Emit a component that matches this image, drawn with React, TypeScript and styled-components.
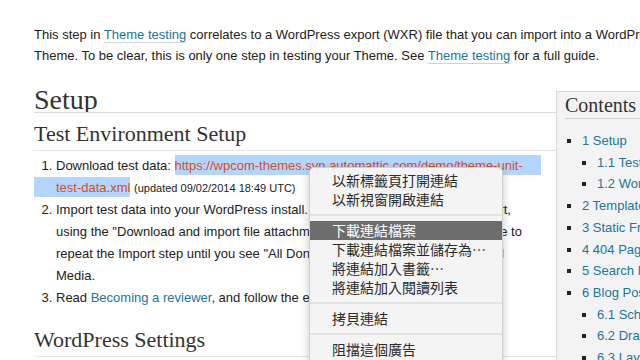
import React from 'react'
import styled, { createGlobalStyle } from 'styled-components'

const GlobalStyle = createGlobalStyle`
  html, body {
    margin: 0;
    padding: 0;
    background: #fff;
  }
  body {
    width: 640px;
    height: 360px;
    overflow: hidden;
    font-family: "Liberation Sans", Arial, sans-serif;
  }
`

const Page = styled.main`
  position: relative;
  width: 650px;
  padding: 24px 0 0 34px;
  color: #222;
  font-size: 13px;
`

const Intro = styled.p`
  margin: 0;
  line-height: 21px;
`

const Link = styled.a<{ $underline?: boolean }>`
  color: #21759b;
  text-decoration: ${p => (p.$underline ? 'underline' : 'none')};
  text-decoration-color: #d4d4d4;
  text-underline-offset: 3px;
`

const Content = styled.section`
  display: flow-root;
  margin-top: 22px;
`

const Heading = styled.h1`
  margin: 0;
  overflow: hidden;
  font-family: "Liberation Serif", "Times New Roman", serif;
  font-weight: normal;
  font-size: 28px;
  line-height: 24px;
  color: #333;
  border-bottom: 1px solid #dcdcdc;
`

const SubHeading = styled.h2<{ $gap: number }>`
  margin: ${p => p.$gap}px 0 0;
  padding-bottom: 3px;
  overflow: hidden;
  font-family: "Liberation Serif", "Times New Roman", serif;
  font-weight: normal;
  font-size: 22px;
  line-height: 26px;
  color: #333;
  border-bottom: 1px solid #e4e4e4;
`

const Steps = styled.ol`
  display: flow-root;
  margin: 4px 0 0;
  padding: 0 16px 0 22px;
  line-height: 22px;
`

const Url = styled.a`
  color: #d54e21;
  text-decoration: none;
`

const Selected = styled.span<{ $left?: number; $right?: number }>`
  background: #b4d5fe;
  padding: 3px 0 2px;
  box-shadow: ${p =>
    p.$left ? `-${p.$left}px 0 0 #b4d5fe` : p.$right ? `${p.$right}px 0 0 #b4d5fe` : 'none'};
`

const Small = styled.small`
  font-size: 11px;
`

const Toc = styled.nav`
  float: right;
  box-sizing: border-box;
  width: 128px;
  height: 320px;
  margin-top: 3px;
  padding: 2px 0 0 8px;
  background: #f3f3f3;
  border: 1px solid #d9d9d9;
  border-right: none;
  white-space: nowrap;
  overflow: hidden;
`

const TocTitle = styled.div`
  font-family: "Liberation Serif", "Times New Roman", serif;
  font-size: 20px;
  line-height: 22px;
  padding-bottom: 2px;
  color: #333;
  border-bottom: 1px solid #cfcfcf;
`

const TocList = styled.ul<{ $nested?: boolean }>`
  margin: ${p => (p.$nested ? '0' : '11px 0 0')};
  padding-left: ${p => (p.$nested ? '15px' : '17px')};
  list-style: square;
  line-height: 21.7px;
  color: #222;
`

const Menu = styled.ul`
  position: absolute;
  left: 309px;
  top: 167px;
  box-sizing: border-box;
  width: 194px;
  margin: 0;
  padding: 3px 0;
  list-style: none;
  background: #f4f4f4;
  border: 1px solid #d0d0d0;
  border-radius: 5px;
  box-shadow: 0 3px 10px rgba(0, 0, 0, 0.22);
  font-family: "Noto Sans CJK TC", "Noto Sans CJK SC", sans-serif;
  font-size: 14px;
  color: #2b2b2b;
`

const MenuItem = styled.li<{ $active?: boolean }>`
  height: 19px;
  line-height: 19px;
  padding-left: 22px;
  white-space: nowrap;
  background: ${p => (p.$active ? '#6d6d6d' : 'transparent')};
  color: ${p => (p.$active ? '#fff' : 'inherit')};
`

const MenuSeparator = styled.li`
  height: 2px;
  margin: 5px 0;
  background: #e2e2e2;
`

const toc = [
  { label: '1 Setup', children: ['1.1 Test Environment Setup', '1.2 WordPress Settings'] },
  { label: '2 Template Hierarchy' },
  { label: '3 Static Front Page' },
  { label: '4 404 Page' },
  { label: '5 Search Results' },
  { label: '6 Blog Posts Index', children: ['6.1 Scheduled', '6.2 Draft', '6.3 Layout'] },
]

const menu: (string | null)[] = [
  '以新標籤頁打開連結',
  '以新視窗開啟連結',
  null,
  '下載連結檔案',
  '下載連結檔案並儲存為⋯',
  '將連結加入書籤⋯',
  '將連結加入閱讀列表',
  null,
  '拷貝連結',
  null,
  '阻擋這個廣告',
]

export default function App() {
  return (
    <>
      <GlobalStyle />
      <Page>
        <Intro>
          This step in <Link $underline href="#">Theme testing</Link> correlates to a WordPress export (WXR)
          file that you can import into a WordPress Theme. To be clear, this is only one step in testing your
          Theme. See <Link $underline href="#">Theme testing</Link> for a full guide.
        </Intro>

        <Content>
          <Toc>
            <TocTitle>Contents</TocTitle>
            <TocList>
              {toc.map(item => (
                <li key={item.label}>
                  <Link href="#">{item.label}</Link>
                  {item.children && (
                    <TocList $nested>
                      {item.children.map(c => (
                        <li key={c}>
                          <Link href="#">{c}</Link>
                        </li>
                      ))}
                    </TocList>
                  )}
                </li>
              ))}
            </TocList>
          </Toc>

          <Heading>Setup</Heading>
          <SubHeading $gap={8}>Test Environment Setup</SubHeading>
          <Steps>
            <li>
              Download test data:{' '}
              <Url href="#">
                <Selected $right={18}>https://wpcom-themes.svn.automattic.com/demo/theme-unit-</Selected>
                <br />
                <Selected $left={22}>test-data.xml</Selected>
              </Url>{' '}
              <Small>(updated 09/02/2014 18:49 UTC)</Small>
            </li>
            <li>
              Import test data into your WordPress install. Include the attachments on import, using the
              "Download and import file attachments" checkbox. If it failed, be sure to repeat the Import
              step until you see "All Done. Have fun!" in Posts, Pages and Media.
            </li>
            <li>
              Read <Link href="#">Becoming a reviewer</Link>, and follow the expectations.
            </li>
          </Steps>
          <SubHeading $gap={18}>WordPress Settings</SubHeading>
        </Content>

        <Menu>
          {menu.map((m, i) =>
            m === null ? <MenuSeparator key={i} /> : <MenuItem key={i} $active={i === 3}>{m}</MenuItem>
          )}
        </Menu>
      </Page>
    </>
  )
}
